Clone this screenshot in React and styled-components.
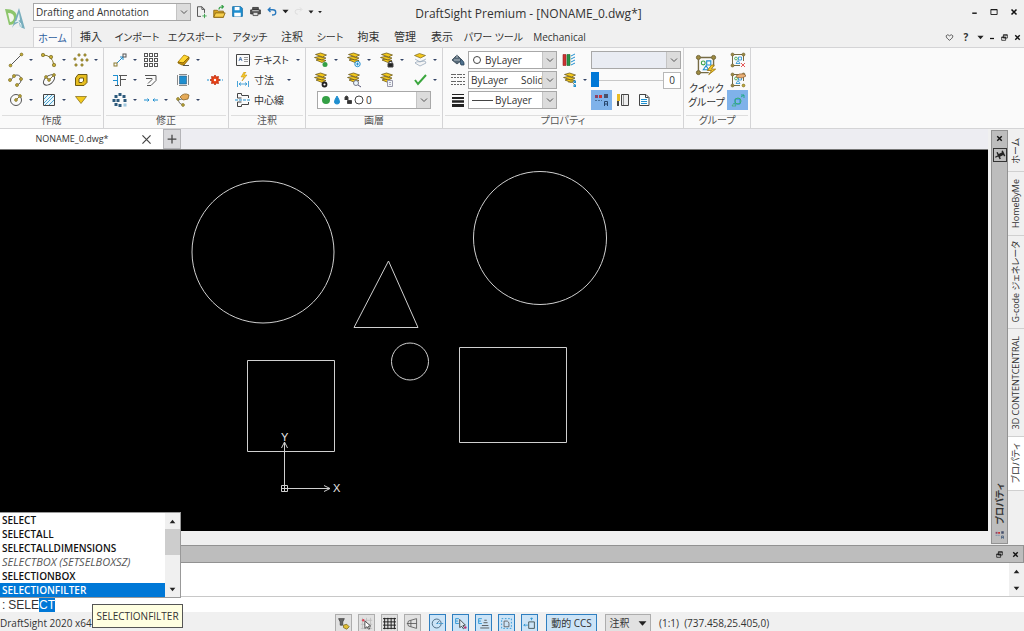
import React, { useEffect, useRef } from 'react';
import styled, { createGlobalStyle, css } from 'styled-components';

const palette = {
  chrome: '#f0f0f0',
  ribbon: '#fafafa',
  line: '#d4d4d6',
  text: '#333333',
  accent: '#0078d7',
  active: '#7fb2ea',
  olive: '#8a7a30',
  yellow: '#f5c518',
  blue: '#1f8fd0',
  navy: '#2d5a7c',
  green: '#35a046',
  dock: '#bdbdbd'
};

const GlobalStyle = createGlobalStyle`
  * {
    box-sizing: border-box;
  }
  body {
    margin: 0;
    background: ${palette.chrome};
    color: ${palette.text};
    font: 10px/14px 'Open Sans', 'Noto Sans CJK JP', sans-serif;
    font-feature-settings: 'palt';
  }
  button, input, select {
    margin: 0;
    padding: 0;
    border: 0;
    background: none;
    color: inherit;
    font: inherit;
    font-feature-settings: inherit;
    outline: none;
  }
  svg {
    display: block;
    flex: none;
  }
`;

const Page = styled.div`
  display: flex;
  flex-direction: column;
  min-height: 100vh;
  overflow: hidden;
`;

const Header = styled.header`
  display: grid;
  grid-template-columns: 33px 1fr;
  height: 47px;
`;

const Brand = styled.div`
  grid-row: 1 / 3;
  padding: 7px 0 0 4px;
`;

const TitleBar = styled.div`
  display: grid;
  grid-template-columns: 1fr auto 1fr;
  align-items: center;
  height: 27px;
`;

const QuickAccess = styled.div`
  display: flex;
  align-items: center;
  gap: 2px;
  padding-bottom: 4px;
`;

const Title = styled.h1`
  margin: 0;
  font-size: 12px;
  font-weight: 400;
  line-height: 20px;
`;

const WindowButtons = styled.div`
  display: flex;
  justify-content: flex-end;
  gap: ${({ small }) => (small ? 1 : 8)}px;
  padding: ${({ small }) => (small ? '0 1px 0 0' : '0 4px 4px 0')};
  margin-left: auto;
`;

const Plain = styled.button`
  display: flex;
  align-items: center;
  justify-content: center;
  width: ${({ w }) => w || 16}px;
  height: ${({ h }) => h || 16}px;
  font-weight: ${({ bold }) => (bold ? 700 : 400)};
`;

const TabBar = styled.nav`
  display: flex;
  align-items: center;
  height: 20px;
`;

const Tab = styled.button`
  width: ${({ w }) => w}px;
  height: 20px;
  font-size: ${({ kanji }) => (kanji ? 11 : 10)}px;
  white-space: nowrap;
  ${({ active }) =>
    active &&
    css`
      color: #2f5f9f;
      background: ${palette.ribbon};
      border: 1px solid ${palette.line};
      border-bottom: 0;
    `};
`;

const Ribbon = styled.section`
  display: flex;
  height: 82px;
  background: ${palette.ribbon};
  border-top: 1px solid ${palette.line};
  border-bottom: 1px solid ${palette.line};
`;

const Group = styled.div`
  display: flex;
  flex-direction: column;
  justify-content: space-between;
  width: ${({ w }) => w}px;
  border-right: 1px solid ${palette.line};
`;

const GroupLabel = styled.div`
  height: 13px;
  margin: 0 2px;
  border-top: 1px solid #dedede;
  color: #555;
  line-height: 9px;
  text-align: center;
`;

const Tools = styled.div`
  display: grid;
  grid-template-columns: ${({ cols }) => cols};
  grid-auto-rows: 20px;
  align-items: center;
  padding: 2px 0 0 ${({ inset }) => inset}px;
`;

const Row = styled.div`
  display: flex;
  align-items: center;
  height: 20px;
  padding-left: ${({ inset }) => inset || 0}px;
`;

const ToolButton = styled.button`
  display: flex;
  align-items: center;
  width: max-content;
  height: 18px;
  white-space: nowrap;
`;

const Arrow = styled.span`
  display: flex;
  justify-content: center;
  width: 14px;

  &::after {
    content: '';
    border: 2px solid transparent;
    border-top-color: #334466;
    border-bottom: 0;
  }
`;

const NoteButton = styled(ToolButton)`
  width: ${({ w }) => w}px;

  > span:nth-child(2) {
    flex: 1;
    padding-left: 3px;
    text-align: left;
  }
`;

const SelectBox = styled.label`
  display: flex;
  align-items: center;
  width: ${({ w }) => w}px;
  height: 18px;
  border: 1px solid #a8a8a8;
  background: ${({ off }) => (off ? '#e9ecf3' : '#fff')};

  select {
    flex: 1;
    min-width: 0;
    height: 16px;
    padding-left: 2px;
    appearance: none;
    text-overflow: clip;
    opacity: 1;
  }
`;

const DropMark = styled.span`
  display: flex;
  align-items: center;
  justify-content: center;
  width: 14px;
  height: 16px;
  background: #dcdcdc;
  border-left: 1px solid #c4c4c4;
`;

const PropertyGrid = styled.div`
  display: grid;
  grid-template-columns: 18px 89px 34px 90px;
  grid-auto-rows: 20px;
  align-items: center;
  padding: 2px 0 0 7px;
`;

const SliderRow = styled.div`
  display: flex;
  align-items: center;

  input[type='range'] {
    -webkit-appearance: none;
    width: 72px;
    height: 16px;
  }
  input[type='range']::-webkit-slider-runnable-track {
    height: 16px;
    background: linear-gradient(#c8c8c8, #c8c8c8) center / 100% 1px no-repeat;
  }
  input[type='range']::-webkit-slider-thumb {
    -webkit-appearance: none;
    width: 8px;
    height: 15px;
    background: ${palette.accent};
  }
  input[type='text'] {
    width: 18px;
    height: 17px;
    border: 1px solid #b8b8b8;
    background: #fff;
    text-align: center;
  }
`;

const Toggle = styled.button`
  display: flex;
  align-items: center;
  justify-content: center;
  width: 21px;
  height: 20px;
  background: ${({ active }) => (active ? palette.active : 'transparent')};
`;

const GroupTools = styled.div`
  display: flex;
  justify-content: space-between;
  padding: 2px 2px 0 4px;
`;

const QuickGroup = styled.button`
  display: flex;
  flex-direction: column;
  align-items: center;
  padding-top: 4px;
  line-height: 14px;
  white-space: nowrap;

  svg {
    margin-bottom: 5px;
  }
`;

const Workspace = styled.div`
  display: flex;
  flex: 1;
`;

const Document = styled.main`
  display: flex;
  flex: 1;
  flex-direction: column;
  margin-right: 3px;
  padding-bottom: 14px;
`;

const FileTabs = styled.div`
  display: flex;
  height: 21px;
  background: #ededf2;
  border-bottom: 1px solid #777;
`;

const FileTab = styled.div`
  display: flex;
  align-items: center;
  width: 163px;
  background: #fff;
  font-size: 9px;

  span {
    flex: 1;
    padding-left: 7px;
    text-align: center;
  }
  button {
    margin-right: 8px;
  }
`;

const AddTab = styled(Plain)`
  background: #d9d9dc;
  border: 1px solid #b4b4b8;
`;

const Canvas = styled.div`
  display: flex;
  flex: 1;
  background: #000;

  svg {
    width: 100%;
    height: 381px;
  }
  text {
    font: 11px 'Liberation Sans', sans-serif;
    fill: #e8e8e8;
  }
`;

const Dock = styled.aside`
  display: flex;
  flex-direction: column;
  align-items: center;
  width: 17px;
  margin: 1px 0;
  padding-bottom: 3px;
  background: ${palette.dock};
  border: 1px solid #929292;
`;

const Pin = styled(Plain)`
  margin-top: 3px;
  border: 1px solid #333;
`;

const Sideways = styled.span`
  writing-mode: vertical-rl;
  text-orientation: sideways;
  transform: rotate(180deg);
  white-space: nowrap;
  font-size: 9px;
  line-height: 14px;
  font-weight: ${({ bold }) => (bold ? 700 : 400)};
`;

const DockTitle = styled.div`
  display: flex;
  flex: 1;
  flex-direction: column;
  align-items: center;
  justify-content: flex-end;
  gap: 6px;
`;

const SideTabs = styled.nav`
  width: 16px;
  padding-top: 1px;
`;

const SideTab = styled.button`
  display: flex;
  align-items: center;
  justify-content: center;
  width: 16px;
  height: ${({ h }) => h}px;
  border-bottom: 1px solid #d0d0d0;
  background: ${({ active }) => (active ? '#fff' : 'transparent')};
`;

const CommandPanel = styled.section`
  position: relative;
  background: #fff;
`;

const CommandHeader = styled.div`
  display: flex;
  align-items: center;
  justify-content: flex-end;
  height: 18px;
  background: ${palette.dock};
  border: 1px solid #929292;
`;

const History = styled.div`
  display: flex;
  justify-content: flex-end;
  height: 34px;
  border-bottom: 1px solid #c8c8c8;
`;

const Scroller = styled.div`
  display: flex;
  flex-direction: column;
  justify-content: space-between;
  width: 15px;
  background: ${palette.chrome};
`;

const Thumb = styled.div`
  height: 26px;
  margin-bottom: auto;
  background: #cdcdcd;
`;

const Prompt = styled.label`
  display: flex;
  align-items: center;
  gap: 3px;
  height: 15px;
  padding-left: 2px;
  font: 12px/14px 'Liberation Sans', sans-serif;

  input {
    flex: 1;
    height: 14px;
    caret-color: transparent;
  }
  input::selection {
    background: ${palette.accent};
    color: #fff;
  }
`;

const Suggestions = styled.div`
  position: absolute;
  left: 0;
  bottom: 14px;
  display: flex;
  width: 181px;
  background: #fff;
  border: 1px solid #999;
  border-left: 0;

  ul {
    flex: 1;
    margin: 0;
    padding: 0;
    list-style: none;
  }
`;

const Suggestion = styled.li`
  height: 14px;
  padding-left: 2px;
  color: ${({ selected, alias }) => (selected ? '#fff' : alias ? '#555' : '#111')};
  background: ${({ selected }) => (selected ? palette.accent : 'transparent')};
  font-style: ${({ alias }) => (alias ? 'italic' : 'normal')};
  font-weight: ${({ alias }) => (alias ? 400 : 600)};
  font-size: ${({ alias }) => (alias ? 11 : 10)}px;
`;

const Tooltip = styled.div`
  position: absolute;
  left: 92px;
  top: 59px;
  z-index: 1;
  width: 91px;
  height: 24px;
  background: #ffffe1;
  border: 1px solid #555;
  line-height: 22px;
  text-align: center;
`;

const StatusBar = styled.footer`
  display: flex;
  align-items: flex-end;
  gap: 8px;
  height: 19px;
  line-height: 16px;
`;

const Version = styled.span`
  width: 327px;
`;

const Toggles = styled.div`
  display: flex;
  gap: 6px;
`;

const StatusButton = styled.button`
  display: flex;
  align-items: center;
  justify-content: center;
  gap: 8px;
  width: ${({ w }) => w || 17}px;
  height: 17px;
  white-space: nowrap;
  background: ${({ active }) => (active ? '#cce4f7' : '#e1e1e1')};
  border: 1px solid ${({ active }) => (active ? '#2f7fc0' : '#adadad')};
  border-bottom: 0;
`;

const Icon = ({ size = 16, box = 16, children }) => (
  <svg
    width={size}
    height={size}
    viewBox={`0 0 ${box} ${box}`}
    fill="none"
    stroke="#444"
    strokeWidth="1"
    aria-hidden="true"
  >
    {children}
  </svg>
);

const Nodes = ({ at, r = 1.4 }) =>
  at.map(([x, y]) => (
    <circle key={`${x}-${y}`} cx={x} cy={y} r={r} fill="#c5ac35" stroke="#786b28" strokeWidth=".7" />
  ));

const Squares = ({ at, size = 3, fill = 'none', color = '#555' }) =>
  at.map(([x, y]) => (
    <rect key={`${x}-${y}`} x={x} y={y} width={size} height={size} fill={fill} stroke={color} />
  ));

const Layers = () => (
  <g stroke="#5d4c10" strokeWidth=".7" fill="#f4c81b">
    <path d="M3 8 6 7l7 1.500-4 2z" />
    <path d="M1.500 5.500 6 4.500l7 1.500-4 2z" />
    <path d="m2.500 2.500 5-1.500 6 2-4 2z" />
  </g>
);

const Frame = () => (
  <g>
    <path d="M2.500 4v8M4 2.500h8M13.500 4v5M4 13.500h6" stroke="#766b45" />
    <g fill="#9d8a42" stroke="#665a2a" strokeWidth=".6">
      <circle cx="2.500" cy="2.500" r="1.500" />
      <circle cx="13.500" cy="2.500" r="1.500" />
      <circle cx="2.500" cy="13.500" r="1.500" />
    </g>
    <circle cx="6" cy="6.500" r="1.400" stroke={palette.green} strokeWidth=".8" />
    <path d="M8.500 5h3v3h-3zM6 11.500l2-3 2 3z" stroke={palette.blue} strokeWidth=".8" />
  </g>
);

const glyphs = {
  newFile: (
    <g>
      <path d="M4 2h5l3 3v4M4 2v11h4M9 2v3h3" />
      <path d="M12 10v5M9.500 12.500h5" stroke={palette.green} />
    </g>
  ),
  open: (
    <g>
      <path d="M2 6h4l1 1h6v7H2z" fill="#d8a520" stroke="#8a6714" />
      <path d="m4 9h11l-2 5H2z" fill="#f7cf4c" stroke="#8a6714" />
      <path d="M8 5q0-3 4-3M11 0l2 2-2 2" stroke={palette.green} strokeWidth="1.400" />
    </g>
  ),
  save: (
    <g>
      <path d="M2 2h10l2 2v10H2z" fill={palette.blue} stroke="#116ba6" />
      <path d="M4.500 2.500h6v4h-6zM4 9.500h8V14H4z" fill="#fff" stroke="none" />
    </g>
  ),
  print: (
    <g>
      <path d="M4.500 3h7v3h-7zM2 6h12v5H2z" fill="#555" stroke="#333" />
      <path d="M5 9h6v4H5z" fill="#ddd" />
      <path d="M4 7h8" stroke="#eee" />
    </g>
  ),
  undo: (
    <path d="M3 5h6q4 0 4 3.500T8 12M6 2 3 5l3 3" stroke="#2878bd" strokeWidth="1.800" />
  ),
  redo: <path d="M12 5H7Q3 5 3 8.500T7 12M10 2l3 3-3 3" stroke="#d5d5d5" />,
  line: (
    <g>
      <path d="M3 13 13 3" stroke="#555" />
      <Nodes at={[[2.5, 13.5], [13.5, 2.5]]} />
    </g>
  ),
  arc: (
    <g>
      <path d="M2 3q9 0 11 10" stroke={palette.olive} />
      <Nodes at={[[2, 3], [10, 5], [13, 13]]} r={1.7} />
    </g>
  ),
  points: <Nodes at={[[6, 3], [12, 3], [2, 7], [9, 8], [14, 8], [3, 13], [9, 13]]} r={1.2} />,
  spline: (
    <g>
      <path d="M9 13C15 11 14 3 9 3S5 8 2 8" stroke="#555" />
      <Nodes at={[[2, 8], [6, 4], [13, 7], [9, 13]]} r={1.5} />
    </g>
  ),
  ellipse: (
    <g>
      <ellipse cx="8" cy="8" rx="6.500" ry="4" transform="rotate(-40 8 8)" stroke="#555" />
      <path d="M5 5 8 8l5-5" stroke={palette.olive} />
      <Nodes at={[[5, 5], [8, 8], [13, 3]]} />
    </g>
  ),
  region: (
    <g>
      <path d="M5 2.500h9v8l-3 3H2.500V6z" fill="#e6bd1f" stroke="#6f5b13" />
      <path d="M7 6h3.500v3L9 10.500H6V7z" fill="#fff" stroke="#6f5b13" />
    </g>
  ),
  circle: (
    <g>
      <circle cx="8" cy="8" r="5.500" stroke="#555" />
      <path d="m8 8 4-4" stroke={palette.olive} />
      <Nodes at={[[8, 8], [12, 4]]} />
    </g>
  ),
  hatch: (
    <g>
      <path d="M2.500 2.500h11v11h-11z" fill="#eaf6fb" />
      <path d="m3 7 4-4M3 11l8-8M4 13l9-9M8 13l5-5" stroke="#4da3ce" />
    </g>
  ),
  wedge: <path d="M2.500 4.500h11l-5.500 7z" fill="#f3c91b" stroke="#8a7420" strokeWidth=".8" />,
  move: (
    <g>
      <path d="m5 11 6-6" stroke={palette.blue} />
      <path d="M8 5h3v3" stroke={palette.blue} />
      <Squares at={[[2, 11]]} color={palette.olive} />
      <Squares at={[[11, 2]]} />
    </g>
  ),
  pattern: <Squares at={[1.5, 6.5, 11.5].flatMap(x => [1.5, 6.5, 11.5].map(y => [x, y]))} />,
  erase: (
    <g>
      <path d="m3 10 6-7 5 2-6 6z" fill="#ffd733" stroke="#a87b00" strokeWidth=".8" />
      <path d="M3 10v1l4 2h2l5-6V5l-6 6z" fill="#c99410" stroke="#846000" strokeWidth=".8" />
      <path d="M8 13.500h6" stroke="#555" />
    </g>
  ),
  trim: (
    <g>
      <path d="M7 3.500h8M8.500 3v11M8.500 7.500H14M3 13.500h4" stroke="#555" />
      <path d="M1 3.500h5M1 8.500h5M5.500 4v9" stroke={palette.blue} />
    </g>
  ),
  offset: <path d="M2 3.500h11v5l-5 5M3 6.500h6v1l-4 4M8 13.500H4" stroke="#555" />,
  stretch: (
    <g>
      <path d="M4.500 4h7v8h-7z" fill={palette.blue} stroke={palette.navy} strokeWidth=".6" />
      <path d="M2.500 3v10M13.500 3v10M4 2.500h8M4 13.500h8" stroke="#8a8a8a" />
    </g>
  ),
  explode: (
    <g>
      <path d="M0 8h16" stroke={palette.blue} strokeDasharray="2 1" />
      <path d="m8 3 1.300 2 2.200-.5-.5 2.200L13 8l-2 1.300.5 2.200-2.200-.5L8 13l-1.300-2-2.200.5.5-2.200L3 8l2-1.300-.5-2.200 2.200.5z" fill="#e84318" stroke="#bd2d0d" strokeWidth=".8" />
      <circle cx="8" cy="8" r="1.200" fill="#fff" stroke="none" />
    </g>
  ),
  copies: (
    <g>
      <Squares at={[[7, 1.5], [3, 3.5], [11, 3.5], [1, 7.5], [5, 7.5], [12, 7.5]]} fill={palette.navy} color={palette.navy} size={2} />
      <Squares at={[[7, 12.5], [3, 11.5]]} fill={palette.navy} color={palette.navy} size={2} />
      <Squares at={[[12, 12]]} fill="#b5d7ea" color="#9ac4dc" size={2} />
    </g>
  ),
  join: (
    <path d="M1 8h5M4.500 6.500 6 8 4.500 9.500M15 8h-5M11.500 6.500 10 8l1.500 1.500" stroke={palette.blue} />
  ),
  edit: (
    <g>
      <path d="M5 5q4-5 9-2l-1 4-5 1z" fill="#e5aa58" stroke="#8c6426" strokeWidth=".8" />
      <path d="M7 7 3 8q1 4 5 5" stroke="#777" />
      <Nodes at={[[3, 7], [8, 13]]} />
    </g>
  ),
  note: (
    <g>
      <path d="M1.500 2.500h13v11h-13z" />
      <path d="M9 5.500h4M9 7.500h4M9 9.500h4" stroke="#999" />
      <path d="m4 9 1.500-4L7 9M4 7.500h3" stroke="#5a7fae" />
    </g>
  ),
  dimension: (
    <g>
      <path d="M9 0 6 5h3L7 9l5-6H9l2-3z" fill="#f5c928" stroke="#c08a08" strokeWidth=".5" />
      <path d="M2.500 9v6M13.500 9v6M4 12h8M6 10.500 4 12l2 1.500M10 10.500l2 1.500-2 1.500" stroke={palette.blue} strokeWidth=".8" />
    </g>
  ),
  centerline: (
    <g>
      <path d="M6.500 3V1.500h-4V6h4M6.500 10h-4v4.500h4V13M6.500 3.500h7V6M6.500 12.500h7V10" />
      <path d="M0 8h16" stroke={palette.blue} strokeDasharray="3 1" />
    </g>
  ),
  layerOn: <g><Layers /><circle cx="12" cy="12.500" r="2.500" fill={palette.green} stroke="none" /></g>,
  layerAdd: (
    <g><Layers /><circle cx="11.500" cy="12" r="2.700" fill="#fff" stroke={palette.blue} /><path d="M10 12h3M11.500 10.500v3" stroke={palette.blue} /></g>
  ),
  layerLock: <g><Layers /><path d="M9 11.500h5V15H9z" fill="#222" /><path d="M10 11V9.500h3V11" /></g>,
  layerFade: (
    <g>
      <path d="m3 11 5 3 6-3-1-2-9 1zM3 7l5 3 6-3" fill="#f5f5f5" stroke="#9ab" strokeWidth=".8" />
      <path d="m2.500 3.500 5-2 6 2-5 2.500z" fill="#f4c81b" stroke="#7a661c" strokeWidth=".7" />
    </g>
  ),
  layerSet: <g><Layers /><circle cx="11.500" cy="12.500" r="2" fill="#fff" stroke="#222" strokeWidth="1.800" /></g>,
  layerFind: <g><Layers /><circle cx="10" cy="11" r="2.500" fill="#eaf6fd" stroke="#778" /><path d="m12 13 3 2" stroke="#557" /></g>,
  layerList: <g><Layers /><path d="M8.500 8.500h5v6h-5z" fill="#f2f5f7" stroke="#99a" /><path d="M10 10.500h2M10 12.500h2" stroke="#aab" /></g>,
  check: <path d="m3 8 3 4 8-9" stroke="#3aa63d" strokeWidth="2" />,
  paint: (
    <g>
      <path d="m2 8 5-5 5 5-5 4z" fill="#566978" stroke="#31414e" strokeWidth=".8" />
      <path d="M4 8h6M7 2v4" stroke="#cdd6dc" strokeWidth=".8" />
      <path d="M11 7q4 3 3 6h-3q-2-3 0-6z" fill="#4f718e" stroke="#294258" strokeWidth=".8" />
    </g>
  ),
  dashes: (
    <g stroke="#666">
      <path d="M1 2.500h14M1 9.500h14" strokeDasharray="5 1" />
      <path d="M1 5.500h14M1 12.500h14" strokeDasharray="2 1" />
    </g>
  ),
  weights: <g stroke="#222"><path d="M2 2.500h12" /><path d="M2 6h12" strokeWidth="2" /><path d="M2 9.500h12" strokeWidth="2.500" /><path d="M2 13.500h12" strokeWidth="3" /></g>,
  colors: (
    <g>
      <path d="M2 2.500h3v11H2z" fill="#c33" stroke="#922" strokeWidth=".6" />
      <path d="M6 2.500h3v11H6z" fill="#289448" stroke="#17692e" strokeWidth=".6" />
      <path d="m10 4 4-2M10 7l4-2M10 10l4-2M10 13l4-2" stroke={palette.blue} />
    </g>
  ),
  layerState: <g><Layers /><path d="M6 10h4l3 3" stroke={palette.olive} strokeWidth=".8" /><Squares at={[[12, 9], [12, 13]]} size={1.5} color={palette.blue} /></g>,
  match: (
    <g>
      <path d="M1 3h3v3H1z" fill="#8a4468" stroke="none" />
      <path d="M5 3h3v3H5z" fill="#c33" stroke="none" />
      <path d="M10 2h4v4h-4z" fill="#46506c" stroke="none" />
      <path d="M1 8.500h7" stroke="#47709a" strokeDasharray="2 1" />
      <path d="M10.500 14V9.500h3V14M10.500 12h3" stroke="#28466d" />
    </g>
  ),
  palette: <g><path d="M2 2h3v7H2z" fill="#e9bb24" stroke="none" /><path d="M3 9v5" strokeWidth="2" /><path d="M6.500 2.500h7v11h-7z" fill="#eee" /><path d="M8.500 3v10" stroke="#999" /></g>,
  sheet: <g><path d="M3.500 2.500H10l3 3v8H3.500zM9.500 2.500v3h3" fill="#f9ffff" /><path d="M5 7.500h6M5 9.500h6M5 11.500h6" stroke={palette.blue} /></g>,
  group: <g><Frame /><path d="m12 8-3 4h3l-2 3 5-4h-3l2-3z" fill="#f5ca2b" stroke="#98720e" strokeWidth=".6" /></g>,
  ungroup: <g><Frame /><path d="m11 11 4 4M15 11l-4 4" stroke="#e45a5a" /></g>,
  groupEdit: <g><Frame /><path d="M6 4q3-3 8-2l2 2-4 2-5-.5z" fill="#e8af75" stroke="#8c5d34" strokeWidth=".7" /><Nodes at={[[13.5, 13.5]]} /></g>,
  groupToggle: <g><path d="M5 7h5v5H5z" stroke={palette.blue} /><circle cx="8" cy="9" r="3" stroke="#3aaf70" /><path d="m2 14 2-3 2 3z" stroke="#3aaf70" strokeWidth=".7" /><path d="m11 5 3-2M11 3h3v3" stroke="#24a98a" /></g>,
  filter: <g><path d="M2 2h7L7 6v4H4V6z" fill="#666" /><path d="m8 10 4-1 3 3-3 3-4-2z" fill="#e2bf35" stroke="#7d6b1f" /></g>,
  snap: <g><path d="M3 1v14M8 1v14M13 1v14M1 4h14M1 9h14M1 14h14" stroke="#bbb" /><path d="m6 5 7 6-3 .5 2 3-1.500.5-2-3L6 14z" fill="#fff" stroke="#333" /><circle cx="4" cy="4" r="1.500" fill="#d45" stroke="none" /></g>,
  grid: <path d="M2 1v14M6 1v14M10 1v14M14 1v14M0 2h16M0 6h16M0 10h16M0 14h16" stroke="#222" strokeWidth="1.200" />,
  ortho: <path d="M6 4 13 2v12l-7-2zM1 8h12M6 4Q2 4 2 8t4 4" stroke="#555" />,
  polar: <g><circle cx="7" cy="8" r="5.500" stroke="#34556f" /><path d="m7 8 3-3" stroke="#34556f" /><path d="M7 8h9" stroke={palette.blue} strokeDasharray="2 1" /></g>,
  esnap: <g><path d="M6 2H2v6h4M2 5h3" stroke={palette.blue} /><path d="m7 3 7 7-3 .5 2 3-1.500 1-2-3L7 13z" fill="#dfeaf2" stroke="#333" /><circle cx="14" cy="13" r="1.500" fill="#b37" stroke="none" /></g>,
  etrack: <g><path d="M6 2H2v6h4M2 5h3" stroke={palette.blue} /><path d="M9 4h3M8 7h5M6 10.500h8M4 13.500h11" stroke="#444" /></g>,
  quick: <g><path d="M2 2h12v12H2z" stroke={palette.blue} strokeDasharray="2 2" /><path d="M5 5h4q2 1 2 3v4H5z" stroke="#555" /></g>,
  inputBox: <g><path d="M7 6h7v8H7z" stroke="#344" /><path d="M10.500 1v3M1 10h5M2.500 8.500 1 10l1.500 1.500M9 2.500 10.500 1 12 2.500" stroke={palette.blue} /></g>,
  close: <path d="m3 3 10 10M13 3 3 13" strokeWidth="1.500" />,
  boldClose: <path d="m4 4 8 8M12 4l-8 8" stroke="#111" strokeWidth="2.500" />,
  minimize: <path d="M4 11h8" stroke="#111" strokeWidth="2.500" />,
  maximize: <path d="M3 4h10v8H3zM3 4.500h10" stroke="#111" strokeWidth="1.400" />,
  restore: <path d="M6 3h7v6H6zM3 7h7v6H3zM6 4h7M3 8h7" stroke="#111" strokeWidth="1.300" />,
  plus: <path d="M8 1v14M1 8h14" strokeWidth="2" />,
  pin: (
    <g transform="rotate(-25 8 8)">
      <path d="M1 8h5" stroke="#222" strokeWidth="1.500" />
      <path d="M5 3h2v3h5V4h2v8h-2v-2H7v3H5z" fill="#222" stroke="none" />
    </g>
  ),
  down: <path d="M3 5h10l-5 6z" fill="#222" stroke="none" />,
  wideDown: <path d="M1 4h14l-7 8z" fill="#222" stroke="none" />,
  up: <path d="m3 11 5-6 5 6z" fill="#222" stroke="none" />,
  heart: <path d="M8 13C4 10 2 8 2 5q3-4 6 0 3-4 6 0c0 3-2 5-6 8z" stroke="#333" strokeWidth="1.300" />
};

const Glyph = ({ name, size }) => <Icon size={size}>{glyphs[name]}</Icon>;

const Tool = ({ name, menu }) => (
  <ToolButton aria-label={name}>
    <Glyph name={name} />
    {menu && <Arrow />}
  </ToolButton>
);

const Select = ({ label, value, children, ...rest }) => (
  <SelectBox {...rest}>
    {children}
    <select aria-label={label} disabled={rest.off}>
      <option>{value}</option>
    </select>
    <DropMark>
      <Icon size={8} box={8}>
        <path d="m1 2.500 3 3 3-3" stroke="#555" />
      </Icon>
    </DropMark>
  </SelectBox>
);

const Logo = () => (
  <svg width="22" height="24" viewBox="0 0 22 24" aria-hidden="true">
    <path d="M1 2q12 0 12 9-1 7-8 7z" fill="#8cc56b" />
    <path d="M4 6q6 0 6 5-1 4-4 4z" fill="#f3f7ec" />
    <path d="m15 1 6 21-5-2-1-5-5 3-2 3z" fill="#79aebd" />
    <path d="m15 6-3 9 4-2z" fill="#e8f2f4" />
    <path d="M11 15q5-2 6 3t-6 3" fill="none" stroke="#edf7fa" />
  </svg>
);

const tabs = [
  ['ホーム', 39],
  ['挿入', 38, true],
  ['インポート', 54],
  ['エクスポート', 62],
  ['アタッチ', 48],
  ['注釈', 36, true],
  ['シート', 40],
  ['拘束', 37, true],
  ['管理', 36, true],
  ['表示', 38, true],
  ['パワー ツール', 65],
  ['Mechanical', 67]
];

const createTools = [
  ['line', 1], ['arc', 1], ['points', 1],
  ['spline', 1], ['ellipse', 1], ['region'],
  ['circle', 1], ['hatch', 1], ['wedge']
];

const modifyTools = [
  ['move', 1], ['pattern'], ['erase', 1], null,
  ['trim', 1], ['offset'], ['stretch'], ['explode'],
  ['copies', 1], ['join', 1], ['edit', 1], null
];

const layerTools = [
  ['layerOn', 1], ['layerAdd', 1], ['layerLock', 1], ['layerFade', 1],
  ['layerSet'], ['layerFind'], ['layerList'], ['check', 1]
];

const commands = [
  'SELECT',
  'SELECTALL',
  'SELECTALLDIMENSIONS',
  'SELECTBOX (SETSELBOXSZ)',
  'SELECTIONBOX',
  'SELECTIONFILTER'
];

const ToolList = ({ items }) =>
  items.map((item, i) =>
    item ? <Tool key={item[0]} name={item[0]} menu={item[1]} /> : <span key={i} />
  );

const RibbonBar = () => (
  <Ribbon>
    <Group w={104}>
      <Tools cols="33px 32px 31px" inset={8}>
        <ToolList items={createTools} />
      </Tools>
      <GroupLabel>作成</GroupLabel>
    </Group>
    <Group w={125}>
      <Tools cols="31px 32px 32px 16px" inset={8}>
        <ToolList items={modifyTools} />
      </Tools>
      <GroupLabel>修正</GroupLabel>
    </Group>
    <Group w={77}>
      <Tools cols="1fr" inset={6}>
        <NoteButton w={70}>
          <Glyph name="note" />
          <span>テキスト</span>
          <Arrow />
        </NoteButton>
        <NoteButton w={61}>
          <Glyph name="dimension" />
          <span>寸法</span>
          <Arrow />
        </NoteButton>
        <NoteButton w={61}>
          <Glyph name="centerline" />
          <span>中心線</span>
        </NoteButton>
      </Tools>
      <GroupLabel>注釈</GroupLabel>
    </Group>
    <Group w={137}>
      <div>
        <Tools cols="repeat(4, 33px)" inset={7}>
          <ToolList items={layerTools} />
        </Tools>
        <Row inset={11}>
          <Select label="Layer" value="0" w={114}>
            <Icon size={46} box={46}>
              <circle cx="8" cy="23" r="4" fill={palette.green} stroke="none" />
              <path d="M19 19q-5 8 0 8t0-8z" fill={palette.blue} stroke={palette.blue} />
              <path d="M27 23v-3q2-2 3 0v3M29.500 23.500h4v3h-4z" fill="#333" />
              <circle cx="41" cy="23" r="4" />
            </Icon>
          </Select>
        </Row>
      </div>
      <GroupLabel>画層</GroupLabel>
    </Group>
    <Group w={241}>
      <PropertyGrid>
        <Glyph name="paint" />
        <Select label="Color" value="ByLayer" w={89}>
          <Icon size={14} box={14}>
            <circle cx="8" cy="7" r="3.500" />
          </Icon>
        </Select>
        <Row inset={4}>
          <Tool name="colors" />
        </Row>
        <Select label="Style" value="" w={90} off />
        <Glyph name="dashes" />
        <Select label="Line style" value={'ByLayer\u00a0\u00a0\u00a0\u00a0\u00a0Solid line'} w={89} />
        <Row inset={5}>
          <Tool name="layerState" menu />
        </Row>
        <SliderRow>
          <input type="range" aria-label="Transparency" min="0" max="90" defaultValue="0" />
          <input type="text" aria-label="Transparency value" defaultValue="0" />
        </SliderRow>
        <Glyph name="weights" />
        <Select label="Line weight" value="ByLayer" w={89}>
          <Icon size={24} box={24}>
            <path d="M3 12.500h21" />
          </Icon>
        </Select>
        <span />
        <Row>
          <Toggle active aria-label="match"><Glyph name="match" /></Toggle>
          <Toggle aria-label="palette"><Glyph name="palette" /></Toggle>
          <Toggle aria-label="sheet"><Glyph name="sheet" /></Toggle>
        </Row>
      </PropertyGrid>
      <GroupLabel>プロパティ</GroupLabel>
    </Group>
    <Group w={67}>
      <GroupTools>
        <QuickGroup>
          <Glyph name="group" size={22} />
          <span>クイック</span>
          <span>グループ</span>
        </QuickGroup>
        <div>
          <Toggle aria-label="ungroup"><Glyph name="ungroup" /></Toggle>
          <Toggle aria-label="edit group"><Glyph name="groupEdit" /></Toggle>
          <Toggle active aria-label="toggle group"><Glyph name="groupToggle" /></Toggle>
        </div>
      </GroupTools>
      <GroupLabel>グループ</GroupLabel>
    </Group>
  </Ribbon>
);

const Drawing = () => (
  <Canvas>
    <svg fill="none" stroke="#d0d0d0" strokeWidth="1">
      <circle cx="263" cy="102" r="71" />
      <circle cx="540" cy="88" r="66.500" />
      <path d="m388.500 111-34.500 66.500h64z" />
      <circle cx="410" cy="211.500" r="18.500" />
      <path d="M247.500 210.500h87v91h-87zM459.500 197.500h107v95h-107z" />
      <path d="M284.500 338.500V292M281.500 298l3-6 3 6M284.500 338.500H330M324 335.500l6 3-6 3M281.500 335.500h6v6h-6zM281.500 338.500h6M284.500 335v6" />
      <g stroke="none">
        <text x="281" y="291">Y</text>
        <text x="333" y="342">X</text>
      </g>
    </svg>
  </Canvas>
);

const CommandLine = () => {
  const input = useRef(null);

  useEffect(() => {
    input.current.focus();
    input.current.setSelectionRange(4, 6);
  }, []);

  return (
    <CommandPanel>
      <CommandHeader>
        <Plain aria-label="Float"><Glyph name="restore" size={9} /></Plain>
        <Plain aria-label="Close"><Glyph name="boldClose" size={9} /></Plain>
      </CommandHeader>
      <History>
        <Scroller>
          <Plain w={15} aria-label="Up"><Glyph name="up" size={9} /></Plain>
          <Plain w={15} aria-label="Down"><Glyph name="down" size={9} /></Plain>
        </Scroller>
      </History>
      <Prompt>
        :
        <input ref={input} type="text" aria-label="Command" defaultValue="SELECT" />
      </Prompt>
      <Suggestions>
        <ul>
          {commands.map(name => (
            <Suggestion
              key={name}
              alias={name.includes('(') ? 1 : undefined}
              selected={name === 'SELECTIONFILTER'}
            >
              {name}
            </Suggestion>
          ))}
        </ul>
        <Scroller>
          <Plain w={15} aria-label="Up"><Glyph name="up" size={9} /></Plain>
          <Thumb />
          <Plain w={15} aria-label="Down"><Glyph name="down" size={9} /></Plain>
        </Scroller>
      </Suggestions>
      <Tooltip role="tooltip">SELECTIONFILTER</Tooltip>
    </CommandPanel>
  );
};

export default function App() {
  return (
    <Page>
      <GlobalStyle />
      <Header>
        <Brand><Logo /></Brand>
        <TitleBar>
          <QuickAccess>
            <Select label="Workspace" value="Drafting and Annotation" w={158} />
            <Plain aria-label="New"><Glyph name="newFile" size={14} /></Plain>
            <Plain aria-label="Open"><Glyph name="open" size={14} /></Plain>
            <Plain aria-label="Save"><Glyph name="save" size={13} /></Plain>
            <Plain aria-label="Print"><Glyph name="print" size={13} /></Plain>
            <Plain w={14} aria-label="Undo"><Glyph name="undo" size={12} /></Plain>
            <Plain w={8} aria-label="Undo list"><Glyph name="wideDown" size={7} /></Plain>
            <Plain w={14} aria-label="Redo"><Glyph name="redo" size={11} /></Plain>
            <Plain w={8} aria-label="Redo list"><Glyph name="down" size={8} /></Plain>
            <Plain w={6} aria-label="Customize"><Glyph name="down" size={6} /></Plain>
          </QuickAccess>
          <Title>DraftSight Premium - [NONAME_0.dwg*]</Title>
          <WindowButtons>
            <Plain w={12} aria-label="Minimize"><Glyph name="minimize" size={9} /></Plain>
            <Plain w={12} aria-label="Maximize"><Glyph name="maximize" size={10} /></Plain>
            <Plain w={12} aria-label="Close"><Glyph name="boldClose" size={10} /></Plain>
          </WindowButtons>
        </TitleBar>
        <TabBar>
          {tabs.map(([name, w, kanji], i) => (
            <Tab key={name} w={w} kanji={kanji ? 1 : undefined} active={i === 0 ? 1 : undefined}>
              {name}
            </Tab>
          ))}
          <WindowButtons small="true">
            <Plain aria-label="Favourite"><Glyph name="heart" size={9} /></Plain>
            <Plain bold="true">?</Plain>
            <Plain w={10} aria-label="Help menu"><Glyph name="wideDown" size={7} /></Plain>
            <Plain w={11} aria-label="Minimize"><Glyph name="minimize" size={8} /></Plain>
            <Plain w={12} aria-label="Restore"><Glyph name="restore" size={9} /></Plain>
            <Plain w={12} aria-label="Close"><Glyph name="boldClose" size={9} /></Plain>
          </WindowButtons>
        </TabBar>
      </Header>
      <RibbonBar />
      <Workspace>
        <Document>
          <FileTabs>
            <FileTab>
              <span>NONAME_0.dwg*</span>
              <Plain w={18} aria-label="Close drawing"><Glyph name="close" size={13} /></Plain>
            </FileTab>
            <AddTab w={18} h={20} aria-label="New drawing"><Glyph name="plus" size={10} /></AddTab>
          </FileTabs>
          <Drawing />
        </Document>
        <Dock>
          <Plain w={14} h={14} aria-label="Close"><Glyph name="boldClose" size={9} /></Plain>
          <Pin w={14} h={14} aria-label="Pin"><Glyph name="pin" size={12} /></Pin>
          <DockTitle>
            <Sideways bold="true">プロパティ</Sideways>
            <Glyph name="match" size={10} />
          </DockTitle>
        </Dock>
        <SideTabs>
          <SideTab h={42}><Sideways>ホーム</Sideways></SideTab>
          <SideTab h={64}><Sideways>HomeByMe</Sideways></SideTab>
          <SideTab h={93}><Sideways>G-code ジェネレータ</Sideways></SideTab>
          <SideTab h={108}><Sideways>3D CONTENTCENTRAL</Sideways></SideTab>
          <SideTab h={54} active><Sideways>プロパティ</Sideways></SideTab>
        </SideTabs>
      </Workspace>
      <CommandLine />
      <StatusBar>
        <Version>DraftSight 2020 x64</Version>
        <Toggles>
          {['filter', 'snap', 'grid', 'ortho'].map(name => (
            <StatusButton key={name} aria-label={name}><Glyph name={name} size={13} /></StatusButton>
          ))}
        </Toggles>
        <Toggles>
          {['polar', 'esnap', 'etrack', 'quick', 'inputBox'].map(name => (
            <StatusButton key={name} active aria-label={name}><Glyph name={name} size={13} /></StatusButton>
          ))}
        </Toggles>
        <StatusButton w={51} active>動的 CCS</StatusButton>
        <StatusButton w={46}>
          注釈
          <Glyph name="wideDown" size={9} />
        </StatusButton>
        <span>(1:1)&nbsp; (737.458,25.405,0)</span>
      </StatusBar>
    </Page>
  );
}
